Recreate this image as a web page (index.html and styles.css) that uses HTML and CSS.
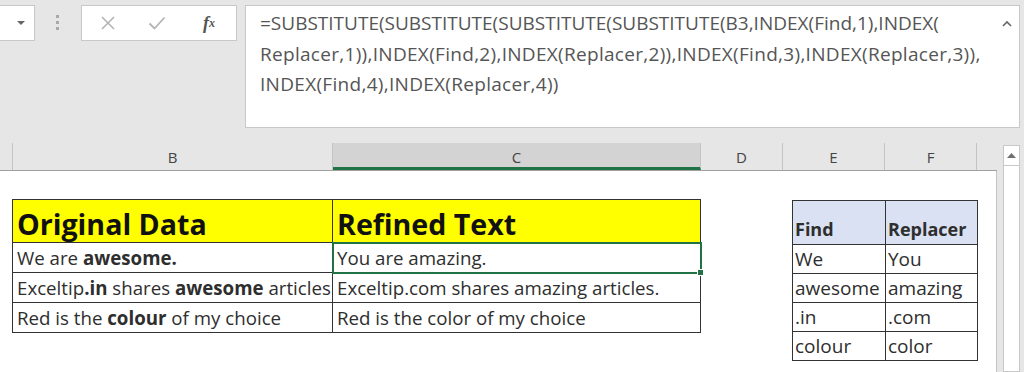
FILE: index.html
```html
<!DOCTYPE html>
<html>
<head>
<meta charset="utf-8">
<link rel="stylesheet" href="styles.css">
</head>
<body>
<div class="app">
  <div class="topbar">
    <div class="namebox"><span class="dd"></span></div>
    <div class="grip"><i></i><i></i><i></i></div>
    <div class="fxbox">
      <span class="btn x">
        <svg width="16" height="16" viewBox="0 0 16 16"><path d="M2 2 L14 14 M14 2 L2 14" stroke="#b4b4b4" stroke-width="1.6" fill="none"/></svg>
      </span>
      <span class="btn ok">
        <svg width="18" height="16" viewBox="0 0 18 16"><path d="M1.5 8.5 L6.5 13.5 L16.5 2.5" stroke="#b4b4b4" stroke-width="1.8" fill="none"/></svg>
      </span>
      <span class="btn fx">f<sub>x</sub></span>
    </div>
    <div class="formula">
      <div class="ftext">
        <div class="fline">=SUBSTITUTE(SUBSTITUTE(SUBSTITUTE(SUBSTITUTE(B3,INDEX(Find,1),INDEX(</div>
        <div class="fline l2">Replacer,1)),INDEX(Find,2),INDEX(Replacer,2)),INDEX(Find,3),INDEX(Replacer,3)),</div>
        <div class="fline l2">INDEX(Find,4),INDEX(Replacer,4))</div>
      </div>
      <svg class="caret" width="10" height="7" viewBox="0 0 10 7"><path d="M1 6 L5 2 L9 6" stroke="#666" stroke-width="1.6" fill="none"/></svg>
    </div>
  </div>
  <div class="main">
    <div class="grid">
      <div class="colheads">
        <div class="ch rh"></div>
        <div class="ch cb">B</div>
        <div class="ch cc sel">C</div>
        <div class="ch cd">D</div>
        <div class="ch ce">E</div>
        <div class="ch cf">F</div>
        <div class="ch crest"></div>
      </div>
      <div class="sheet">
        <table class="t1">
          <colgroup><col class="w1"><col class="w2"></colgroup>
          <tr class="hdr"><td>Original Data</td><td>Refined Text</td></tr>
          <tr><td>We are <b>awesome.</b></td><td class="active">You are amazing.<span class="handle"></span></td></tr>
          <tr><td>Exceltip<b>.in</b> shares <b>awesome</b> articles</td><td>Exceltip.com shares amazing articles.</td></tr>
          <tr><td>Red is the <b>colour</b> of my choice</td><td>Red is the color of my choice</td></tr>
        </table>
        <table class="t2">
          <colgroup><col class="v1"><col class="v2"></colgroup>
          <tr class="hdr"><td>Find</td><td>Replacer</td></tr>
          <tr><td>We</td><td>You</td></tr>
          <tr><td>awesome</td><td>amazing</td></tr>
          <tr><td>.in</td><td>.com</td></tr>
          <tr><td>colour</td><td>color</td></tr>
        </table>
      </div>
    </div>
    <div class="vscroll">
      <div class="up"><svg width="9" height="5" viewBox="0 0 9 5"><path d="M0 5 L4.5 0 L9 5 Z" fill="#707070"/></svg></div>
      <div class="track"></div>
    </div>
  </div>
</div>
</body>
</html>
```
FILE: styles.css
```css
* { box-sizing: border-box; }
html, body { margin: 0; padding: 0; }
body {
  width: 1024px;
  height: 372px;
  overflow: hidden;
  background: #e6e6e6;
  font-family: "Open Sans", "Liberation Sans", sans-serif;
}
.app { display: flex; flex-direction: column; height: 372px; }

.topbar {
  display: flex;
  align-items: flex-start;
  padding-top: 5px;
  height: 143px;
}
.namebox {
  width: 36px;
  height: 36px;
  margin-left: -1px;
  background: #fff;
  border: 1px solid #c8c8c8;
  display: flex;
  align-items: center;
  justify-content: flex-end;
  padding-right: 9px;
}
.dd {
  width: 0; height: 0;
  border-left: 4px solid transparent;
  border-right: 4px solid transparent;
  border-top: 4px solid #666;
}
.grip {
  width: 10px;
  margin-left: 17px;
  margin-top: 10px;
  display: flex;
  flex-direction: column;
  align-items: center;
  gap: 3px;
}
.grip i { width: 3px; height: 3px; background: #a8a8a8; display: block; }
.fxbox {
  margin-left: 19px;
  width: 156px;
  height: 36px;
  background: #fff;
  border: 1px solid #c8c8c8;
  display: flex;
  align-items: center;
  padding-left: 18px;
}
.btn { display: flex; align-items: center; justify-content: center; }
.btn.x { width: 16px; }
.btn.ok { width: 18px; margin-left: 32px; }
.btn.fx {
  margin-left: 37px;
  font-family: "Liberation Serif", serif;
  font-style: italic;
  font-weight: bold;
  font-size: 18px;
  color: #555;
}
.btn.fx sub { font-size: 12px; vertical-align: -1px; }
.formula {
  margin-left: 8px;
  width: 775px;
  height: 123px;
  background: #fff;
  border: 1px solid #c8c8c8;
  display: flex;
  justify-content: space-between;
  padding: 2px 7px 0 14px;
}
.ftext { color: #555; font-size: 19px; line-height: 30.5px; }
.fline { white-space: nowrap; }
.l2 { letter-spacing: 0.3px; }
.caret { margin-top: 12px; }

.main { display: flex; flex: 1; }
.grid { width: 997px; display: flex; flex-direction: column; }
.colheads {
  display: flex;
  height: 28px;
  border-bottom: 1px solid #a0a0a0;
}
.ch {
  height: 100%;
  border-right: 1px solid #c4c4c4;
  display: flex;
  align-items: center;
  justify-content: center;
  font-size: 15px;
  color: #444;
  padding-top: 1px;
}
.rh { width: 13px; }
.cb { width: 320px; }
.cc { width: 368px; }
.cd { width: 82px; }
.ce { width: 102px; }
.cf { width: 92px; }
.crest { flex: 1; border-right: 0; }
.sel { background: #d3d3d3; border-bottom: 3px solid #217346; padding-top: 4px; }

.sheet {
  flex: 1;
  background: #fff;
  border-right: 1px solid #c4c4c4;
  display: flex;
  align-items: flex-start;
  padding-top: 28px;
}
table { border-collapse: collapse; color: #2e2e2e; table-layout: fixed; flex: none; }
td {
  border: 1px solid #333;
  padding: 0 4px;
  font-size: 18.7px;
  white-space: nowrap;
  overflow: visible;
  height: 30px;
  line-height: 22px;
}
.t1 { margin-left: 12px; width: 688px; }
.t1 .w1 { width: 320px; }
.t1 .w2 { width: 368px; }
.t1 .hdr td {
  background: #ffff00;
  font-weight: bold;
  font-size: 28.6px;
  line-height: 34px;
  color: #111;
  height: 43px;
  vertical-align: bottom;
  padding-bottom: 1px;
}
.active { position: relative; outline: 2px solid #217346; outline-offset: -1px; }
.handle {
  position: absolute;
  right: -4px;
  bottom: -4px;
  width: 7px;
  height: 7px;
  background: #217346;
  border: 1px solid #fff;
}
.t2 { margin-left: 91px; margin-top: 1px; width: 185px; }
.t2 .v1 { width: 93px; }
.t2 .v2 { width: 92px; }
.t2 td { padding: 0 2px; height: 29px; font-size: 19px; }
.t2 .hdr td {
  background: #d9e1f2;
  font-weight: bold;
  font-size: 18px;
  height: 44px;
  vertical-align: bottom;
  padding-bottom: 4px;
}

.vscroll {
  width: 27px;
  padding: 0 4px 0 6px;
  display: flex;
  flex-direction: column;
  margin-top: 2px;
}
.up {
  height: 21px;
  background: #fff;
  border: 1px solid #c8c8c8;
  display: flex;
  align-items: center;
  justify-content: center;
}
.track { flex: 1; background: #fff; border: 1px solid #c8c8c8; border-top: 0; }
```
